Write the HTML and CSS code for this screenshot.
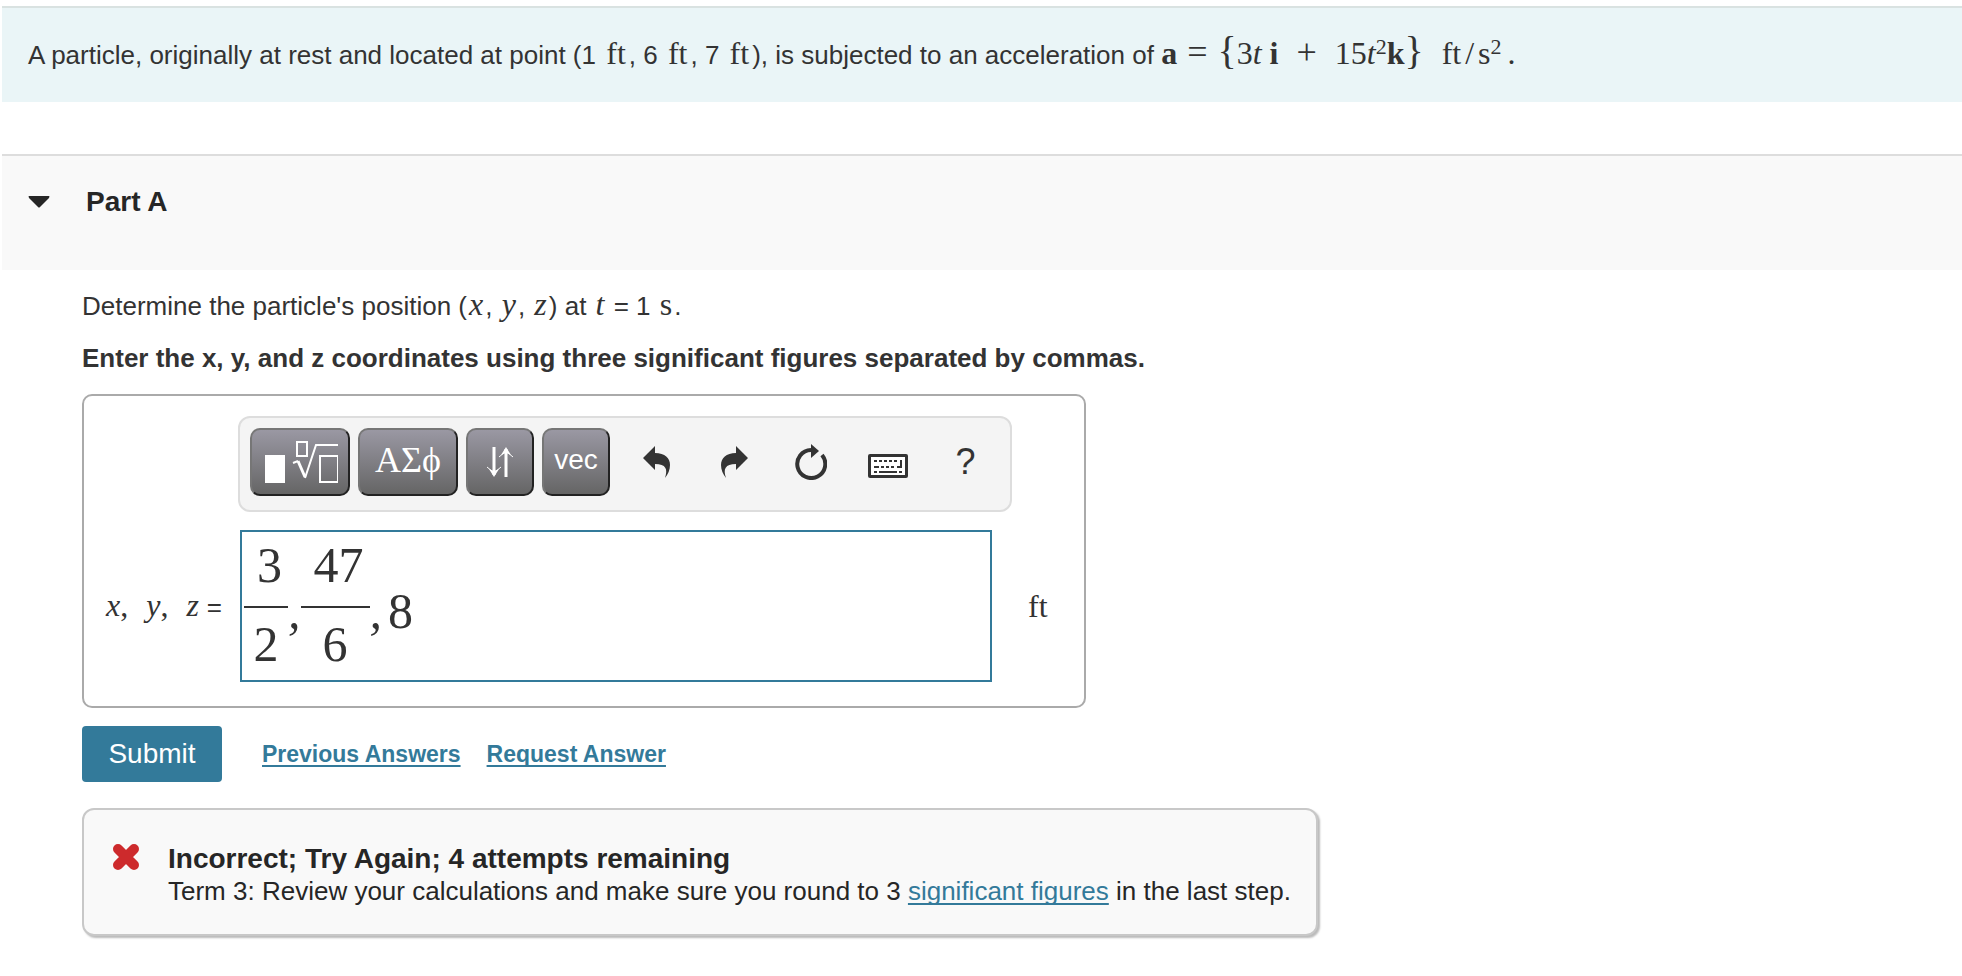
FILE: index.html
```html
<!DOCTYPE html>
<html lang="en">
<head>
    <meta charset="UTF-8">
    <meta name="viewport" content="width=device-width, initial-scale=1.0">
    <title>Part A</title>
    <link rel="stylesheet" href="styles.css">
</head>
<body>
    <header class="intro">
        <p>A particle, originally at rest and located at point (1 <span class="unit">ft</span>, 6 <span class="unit">ft</span>, 7 <span class="unit">ft</span>), is subjected to an acceleration of
            <span class="equation"><b>a</b><span class="op">=</span><span class="brace">{</span><span>3<i>t</i></span><b class="vector">i</b><span class="op plus">+</span><span>15<i>t</i><sup>2</sup><b>k</b></span><span class="brace">}</span><span class="per">ft<span class="slash">/</span>s<sup>2</sup></span><span class="dot">.</span></span>
        </p>
    </header>

    <main>
        <div class="part-header">
            <button class="toggle" aria-label="Collapse Part A">
                <svg width="22" height="12" viewBox="0 0 22 12"><path d="M1 0h20q1 0 0 2l-9 9q-1 1-2 0L1 2q-1-2 0-2z"/></svg>
            </button>
            <h2>Part A</h2>
        </div>

        <section class="part">
            <p class="text">Determine the particle's position (<i class="var">x</i>, <i class="var">y</i>, <i class="var">z</i>) at <i class="var">t</i> = 1 <span class="var">s</span>.</p>
            <p class="text"><strong>Enter the x, y, and z coordinates using three significant figures separated by commas.</strong></p>

            <div class="answer-box">
                <div class="toolbar">
                    <button class="key wide" aria-label="Templates">
                        <svg class="line" width="76" height="44" viewBox="0 0 76 44">
                            <path class="solid" d="M3 15h20v28H3z"/>
                            <path d="M35 2h10v14H35z"/>
                            <path d="M31 23l5-2"/>
                            <path d="M36 21l7 16" stroke-width="3"/>
                            <path d="M43 38L54 5h23"/>
                            <path d="M58 16h18v26H58z"/>
                        </svg>
                    </button>
                    <button class="key wide greek">ΑΣϕ</button>
                    <button class="key" aria-label="Arrows">
                        <svg class="line" width="28" height="30" viewBox="0 0 28 30">
                            <path d="M8 0v28M20 30V2" stroke-width="3"/>
                            <path d="M1 20q5 3 7 8 2-5 7-8M13 10q5-3 7-8 2 5 7 8" stroke-width="1"/>
                            <path class="solid" d="M3 22l5 2 5-2-5 8zM15 8l5-2 5 2-5-8z"/>
                        </svg>
                    </button>
                    <button class="key vec">vec</button>
                    <div class="tools">
                        <button class="tool" aria-label="Undo">
                            <svg width="28" height="32" viewBox="0 0 28 32"><path d="M0 12L12 0v7c10 0 15 5 15 12 0 5-2 9-5 13 3-9 1-14-10-14v6z"/></svg>
                        </button>
                        <button class="tool" aria-label="Redo">
                            <svg width="28" height="32" viewBox="0 0 28 32"><path d="M28 12L16 0v7C6 7 1 12 1 19c0 5 2 9 5 13-3-9-1-14 10-14v6z"/></svg>
                        </button>
                        <button class="tool" aria-label="Reset">
                            <svg width="32" height="36" viewBox="0 0 32 36"><path class="ring" d="M16 6A14 14 0 1 0 27 11"/><path d="M16 0l8 7-8 7z"/></svg>
                        </button>
                        <button class="tool keyboard" aria-label="Keyboard shortcuts">
                            <svg width="40" height="24" viewBox="0 0 40 24">
                                <path d="M2 0h36q2 0 2 2v20q0 2-2 2H2q-2 0-2-2V2q0-2 2-2z"/>
                                <path class="solid" d="M3 3h34v18H3z"/>
                                <path d="M6 6h3v2H6zM11 6h3v2h-3zM16 6h3v2h-3zM21 6h3v2h-3zM26 6h3v2h-3zM32 6h2v8h-5v-2h3zM6 12h5v2H6zM13 12h3v2h-3zM18 12h3v2h-3zM23 12h3v2h-3zM6 17h3v2H6zM11 17h18v2H11zM31 17h3v2h-3z"/>
                            </svg>
                        </button>
                        <button class="tool help" aria-label="Help">?</button>
                    </div>
                </div>
                <div class="label" id="answer-label"><i>x</i>,<i>y</i>,<i>z</i><span>=</span></div>
                <div class="field" role="textbox" aria-labelledby="answer-label" contenteditable="true" spellcheck="false"><span class="fraction"><span class="num">3</span><span class="den">2</span></span><i class="term">,</i><span class="fraction"><span class="num">47</span><span class="den">6</span></span><i class="term">,</i><span class="term whole">8</span></div>
                <div class="suffix">ft</div>
            </div>

            <div class="actions">
                <button class="submit">Submit</button>
                <a href="#previous">Previous Answers</a>
                <a href="#request">Request Answer</a>
            </div>

            <div class="feedback">
                <svg class="cross" width="28" height="28" viewBox="0 0 28 28"><path d="M6 6l16 16M22 6L6 22"/></svg>
                <div>
                    <h3>Incorrect; Try Again; 4 attempts remaining</h3>
                    <p>Term 3: Review your calculations and make sure you round to 3 <a href="#figures">significant figures</a> in the last step.</p>
                </div>
            </div>
        </section>
    </main>
</body>
</html>
```
FILE: styles.css
```css
:root {
    --ink: #333;
    --blue: #337a9a;
    --math: "Liberation Serif", "Times New Roman", serif;
}

* {
    margin: 0;
    padding: 0;
    box-sizing: border-box;
}

body {
    font-family: "Liberation Sans", Arial, sans-serif;
    font-size: 26px;
    line-height: 32px;
    color: var(--ink);
    background: #fff;
    padding: 6px 0 0 2px;
}

button {
    font: inherit;
    color: inherit;
    border: none;
    background: none;
    cursor: pointer;
}

svg {
    display: block;
    fill: var(--ink);
}

a {
    color: var(--blue);
    text-underline-offset: 3px;
    text-decoration-thickness: 2px;
    text-decoration-skip-ink: none;
}

sup {
    font-size: 22px;
    line-height: 0;
    vertical-align: 10px;
}

.intro {
    border-top: 2px solid #d9e2e1;
    background: #eaf5f7;
    padding: 31px 26px;
}

.unit {
    font-family: var(--math);
    font-size: 32px;
    line-height: 0;
    padding: 0 3px;
}

.equation {
    font-family: var(--math);
    font-size: 32px;
    line-height: 0;
    white-space: nowrap;
}

.op {
    font-size: 36px;
    margin: 0 10px;
}

.plus {
    margin: 0 18px;
}

.vector {
    margin-left: 8px;
}

.brace {
    font-size: 40px;
}

.per {
    margin-left: 18px;
}

.slash {
    margin: 0 4px;
}

.dot {
    margin-left: 6px;
}

.part-header {
    display: flex;
    align-items: flex-start;
    gap: 36px;
    margin-top: 52px;
    padding: 30px 26px 52px;
    border-top: 2px solid #ddd;
    background: #f9f9f9;
    color: #262626;
}

.part-header h2 {
    font-size: 28px;
}

.toggle {
    padding: 10px 0;
}

.toggle svg {
    fill: #262626;
}

.part {
    padding: 20px 80px;
}

.part .text {
    margin-bottom: 20px;
}

.var {
    font-family: var(--math);
    font-size: 32px;
    line-height: 0;
    padding: 0 2px;
}

.answer-box {
    display: grid;
    grid-template-columns: 156px minmax(0, 752px) 1fr;
    align-items: center;
    row-gap: 18px;
    max-width: 1004px;
    padding: 20px 0 24px;
    border: 2px solid #aaa;
    border-radius: 10px;
}

.toolbar {
    grid-column: 2 / 4;
    display: flex;
    gap: 8px;
    margin: 0 72px 0 -2px;
    padding: 10px 6px 10px 10px;
    border: 2px solid #ddd;
    border-radius: 12px;
    background: #f4f4f4;
}

.key {
    display: flex;
    align-items: center;
    justify-content: center;
    width: 68px;
    height: 68px;
    margin-bottom: 4px;
    border: 2px solid;
    border-color: #767676 #222 #222 #767676;
    border-radius: 10px;
    background: linear-gradient(#9a98a3, #656565);
    color: #fff;
    font-size: 28px;
}

.wide {
    width: 100px;
}

.greek {
    font-family: var(--math);
    font-size: 36px;
    padding-bottom: 4px;
}

.vec {
    padding-bottom: 4px;
}

.line {
    fill: none;
    stroke: #fff;
    stroke-width: 2;
}

.solid {
    fill: #fff;
    stroke: none;
}

.ring {
    fill: none;
    stroke: var(--ink);
    stroke-width: 4;
}

.tools {
    flex: 1;
    display: flex;
}

.tool {
    flex: 1;
    display: flex;
    align-items: center;
    justify-content: center;
    padding-bottom: 4px;
}

.keyboard {
    padding-top: 8px;
}

.help {
    font-size: 36px;
}

.label {
    display: flex;
    align-items: baseline;
    padding-left: 22px;
    font-family: var(--math);
    font-size: 32px;
}

.label i:not(:first-child) {
    margin-left: 18px;
}

.label span {
    margin-left: 8px;
    font-family: "Liberation Sans", Arial, sans-serif;
    font-size: 26px;
}

.field {
    display: flex;
    align-items: center;
    min-height: 152px;
    padding: 0 2px;
    border: 2px solid var(--blue);
    font-family: var(--math);
    font-size: 50px;
    line-height: 72px;
}

.fraction {
    display: flex;
    flex-direction: column;
    text-align: center;
}

.num {
    padding: 0 6px 8px 13px;
    border-bottom: 2px solid var(--ink);
    line-height: 66px;
}

.term {
    padding-top: 10px;
}

.whole {
    margin-left: 6px;
}

.suffix {
    padding-left: 36px;
    font-family: var(--math);
    font-size: 32px;
}

.actions {
    display: flex;
    align-items: center;
    gap: 26px;
    margin: 18px 0 26px;
    font-size: 23px;
    font-weight: bold;
}

.submit {
    width: 140px;
    height: 56px;
    margin-right: 14px;
    border-radius: 4px;
    background: var(--blue);
    color: #fff;
    font-size: 28px;
    font-weight: normal;
}

.feedback {
    display: flex;
    align-items: flex-start;
    gap: 28px;
    max-width: 1236px;
    padding: 33px 20px 27px 28px;
    border: 2px solid #c8c8c8;
    border-radius: 12px;
    background: #f9f9f9;
    box-shadow: 2px 2px 2px #bbb;
    color: #262626;
}

.feedback h3 {
    font-size: 28px;
}

.cross {
    stroke: #cd2a2c;
    stroke-width: 10;
    stroke-linecap: round;
}
```
